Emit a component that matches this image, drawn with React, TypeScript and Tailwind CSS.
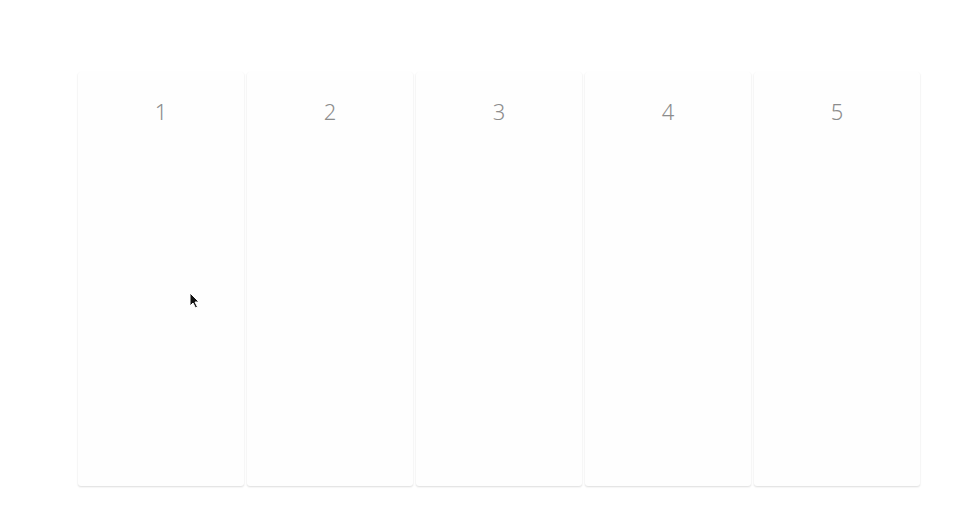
import React from "react";

export default function App() {
  const items = [1, 2, 3, 4, 5];
  return (
    <div className="relative w-[960px] h-[508px] bg-white overflow-hidden" style={{ fontFamily: '"Noto Sans", "Liberation Sans", sans-serif' }}>
      <div className="flex gap-[3px] pl-[78px] pt-[72px]">
        {items.map((n) => (
          <div
            key={n}
            className="w-[166px] h-[414px] bg-[#fefefe] rounded-[3px] shadow-[0_1px_2px_rgba(0,0,0,0.14)] flex justify-center"
          >
            <span className="mt-[24px] text-[22px] leading-[30px] font-light text-[#8c8c8c]">{n}</span>
          </div>
        ))}
      </div>
      <svg className="absolute left-[189px] top-[292px]" width="12" height="18" viewBox="0 0 12 18">
        <path d="M1 1 L1 14 L4 11 L6.5 16 L8.5 15 L6 10 L10 10 Z" fill="#111" stroke="#fff" strokeWidth="1" />
      </svg>
    </div>
  );
}
